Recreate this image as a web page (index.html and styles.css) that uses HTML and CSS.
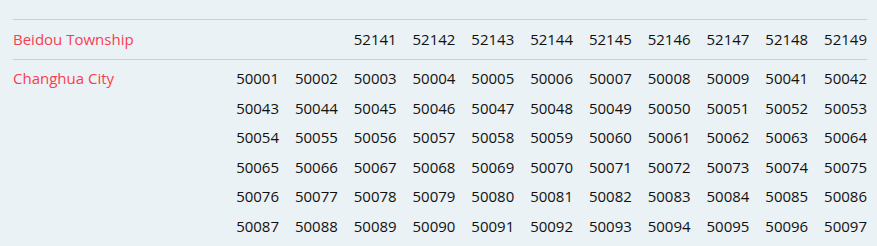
FILE: index.html
```html
<!DOCTYPE html>
<html>
<head>
<meta charset="utf-8">
<link rel="stylesheet" href="styles.css">
</head>
<body>
<div class="table">
  <div class="row">
    <div class="label">Beidou Township</div>
    <div class="codes">
      <span>52141</span><span>52142</span><span>52143</span><span>52144</span><span>52145</span><span>52146</span><span>52147</span><span>52148</span><span>52149</span>
    </div>
  </div>
  <div class="row">
    <div class="label">Changhua City</div>
    <div class="codes">
      <span>50001</span><span>50002</span><span>50003</span><span>50004</span><span>50005</span><span>50006</span><span>50007</span><span>50008</span><span>50009</span><span>50041</span><span>50042</span>
      <span>50043</span><span>50044</span><span>50045</span><span>50046</span><span>50047</span><span>50048</span><span>50049</span><span>50050</span><span>50051</span><span>50052</span><span>50053</span>
      <span>50054</span><span>50055</span><span>50056</span><span>50057</span><span>50058</span><span>50059</span><span>50060</span><span>50061</span><span>50062</span><span>50063</span><span>50064</span>
      <span>50065</span><span>50066</span><span>50067</span><span>50068</span><span>50069</span><span>50070</span><span>50071</span><span>50072</span><span>50073</span><span>50074</span><span>50075</span>
      <span>50076</span><span>50077</span><span>50078</span><span>50079</span><span>50080</span><span>50081</span><span>50082</span><span>50083</span><span>50084</span><span>50085</span><span>50086</span>
      <span>50087</span><span>50088</span><span>50089</span><span>50090</span><span>50091</span><span>50092</span><span>50093</span><span>50094</span><span>50095</span><span>50096</span><span>50097</span>
    </div>
  </div>
</div>
</body>
</html>
```

FILE: styles.css
```css
html, body {
  margin: 0;
  padding: 0;
  background: #ebf2f5;
}
body {
  font-family: "Open Sans", "Noto Sans", sans-serif;
  font-size: 15px;
  color: #111;
}
.table {
  margin: 19px 10px 0 13px;
}
.row {
  display: flex;
  border-top: 1px solid #c9d1d5;
  padding: 4.5px 0;
}
.label {
  width: 206px;
  flex: none;
  color: #f83e50;
  line-height: 29.6px;
}
.codes {
  flex: 1;
  display: flex;
  flex-wrap: wrap;
  justify-content: flex-end;
}
.codes span {
  width: 58.8px;
  text-align: right;
  line-height: 29.6px;
}
```
